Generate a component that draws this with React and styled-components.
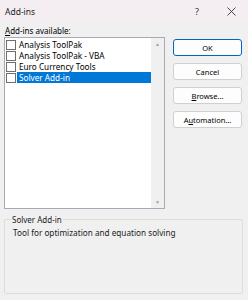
import React from "react";
import styled, { createGlobalStyle } from "styled-components";

const GlobalStyle = createGlobalStyle`
  html, body {
    margin: 0;
    padding: 0;
    background: #f0f0f0;
  }
  body {
    font-family: "Noto Sans", "Open Sans", "Liberation Sans", sans-serif;
    color: #000;
  }
`;

const addins = [
  "Analysis ToolPak",
  "Analysis ToolPak - VBA",
  "Euro Currency Tools",
  "Solver Add-in",
];

const App = () => {
  return (
    <>
      <GlobalStyle />
      <Window>
        <TitleBar>
          <Title>Add-ins</Title>
          <TitleButtons>
            <TitleButton>?</TitleButton>
            <TitleButton>
              <svg width="9" height="9" viewBox="0 0 9 9">
                <path d="M0.5 0.5 L8.5 8.5 M8.5 0.5 L0.5 8.5" stroke="#333" strokeWidth="0.9" />
              </svg>
            </TitleButton>
          </TitleButtons>
        </TitleBar>
        <Body>
          <Top>
            <Left>
              <Label>
                <u>A</u>dd-ins available:
              </Label>
              <ListBox>
                <Items>
                  {addins.map((name, i) => (
                    <Item key={name}>
                      <Check />
                      <ItemText selected={i === 3}>{name}</ItemText>
                    </Item>
                  ))}
                </Items>
                <ScrollBar>
                  <Arrow>▲</Arrow>
                  <Arrow>▼</Arrow>
                </ScrollBar>
              </ListBox>
            </Left>
            <Buttons>
              <Button primary>OK</Button>
              <Button>Cancel</Button>
              <Button>
                <u>B</u>rowse...
              </Button>
              <Button>
                A<u>u</u>tomation...
              </Button>
            </Buttons>
          </Top>
          <Group>
            <Legend>Solver Add-in</Legend>
            <Desc>Tool for optimization and equation solving</Desc>
          </Group>
        </Body>
      </Window>
    </>
  );
};

export default App;

const Window = styled.div`
  width: 248px;
  height: 300px;
  display: flex;
  flex-direction: column;
  background: #f0f0f0;
  overflow: hidden;
`;

const TitleBar = styled.div`
  height: 22px;
  display: flex;
  align-items: center;
  justify-content: space-between;
  background: #f4eef2;
  padding-left: 5px;
`;

const Title = styled.span`
  font-size: 8.5px;
  color: #222;
`;

const TitleButtons = styled.div`
  display: flex;
  align-items: center;
`;

const TitleButton = styled.div`
  width: 34px;
  height: 22px;
  display: flex;
  align-items: center;
  justify-content: center;
  font-size: 9px;
  color: #333;
`;

const Body = styled.div`
  flex: 1;
  display: flex;
  flex-direction: column;
  padding: 3px 5px 6px 4px;
`;

const Top = styled.div`
  display: flex;
  gap: 8px;
`;

const Left = styled.div`
  display: flex;
  flex-direction: column;
  width: 161px;
`;

const Label = styled.div`
  font-size: 8px;
  line-height: 12px;
  padding-left: 1px;
`;

const ListBox = styled.div`
  height: 172px;
  display: flex;
  border: 1px solid #a8a8b6;
  background: #fff;
  box-sizing: border-box;
`;

const Items = styled.div`
  flex: 1;
  padding-top: 1px;
`;

const Item = styled.div`
  display: flex;
  align-items: center;
  height: 11px;
`;

const Check = styled.div`
  width: 10px;
  height: 10px;
  box-sizing: border-box;
  border: 1px solid #6e6e6e;
  background: #fff;
  margin: 0 1px 0 1px;
`;

const ItemText = styled.div`
  flex: 1;
  height: 11px;
  line-height: 11px;
  font-size: 8.2px;
  padding-left: 2px;
  background: ${(p) => (p.selected ? "#0078d7" : "transparent")};
  color: ${(p) => (p.selected ? "#fff" : "#000")};
`;

const ScrollBar = styled.div`
  width: 13px;
  background: #f0f0f0;
  display: flex;
  flex-direction: column;
  justify-content: space-between;
  align-items: center;
  padding: 3px 0;
`;

const Arrow = styled.span`
  font-size: 5px;
  color: #a0a0a0;
`;

const Buttons = styled.div`
  display: flex;
  flex-direction: column;
  gap: 7px;
  padding-top: 14px;
`;

const Button = styled.button`
  width: 69px;
  height: 17px;
  box-sizing: border-box;
  padding: 0;
  font-family: inherit;
  font-size: 7.5px;
  color: #000;
  background: #fdfdfd;
  border: 1px solid ${(p) => (p.primary ? "#0067c0" : "#d0d0d0")};
  border-radius: 3px;
`;

const Group = styled.fieldset`
  flex: 1;
  margin: 5px 0 0 0;
  padding: 2px 8px;
  border: 1px solid #dcdcdc;
  border-radius: 2px;
`;

const Legend = styled.legend`
  font-size: 8px;
  padding: 0 1px;
  margin-left: -2px;
  color: #222;
`;

const Desc = styled.div`
  font-size: 8.2px;
  color: #222;
`;
